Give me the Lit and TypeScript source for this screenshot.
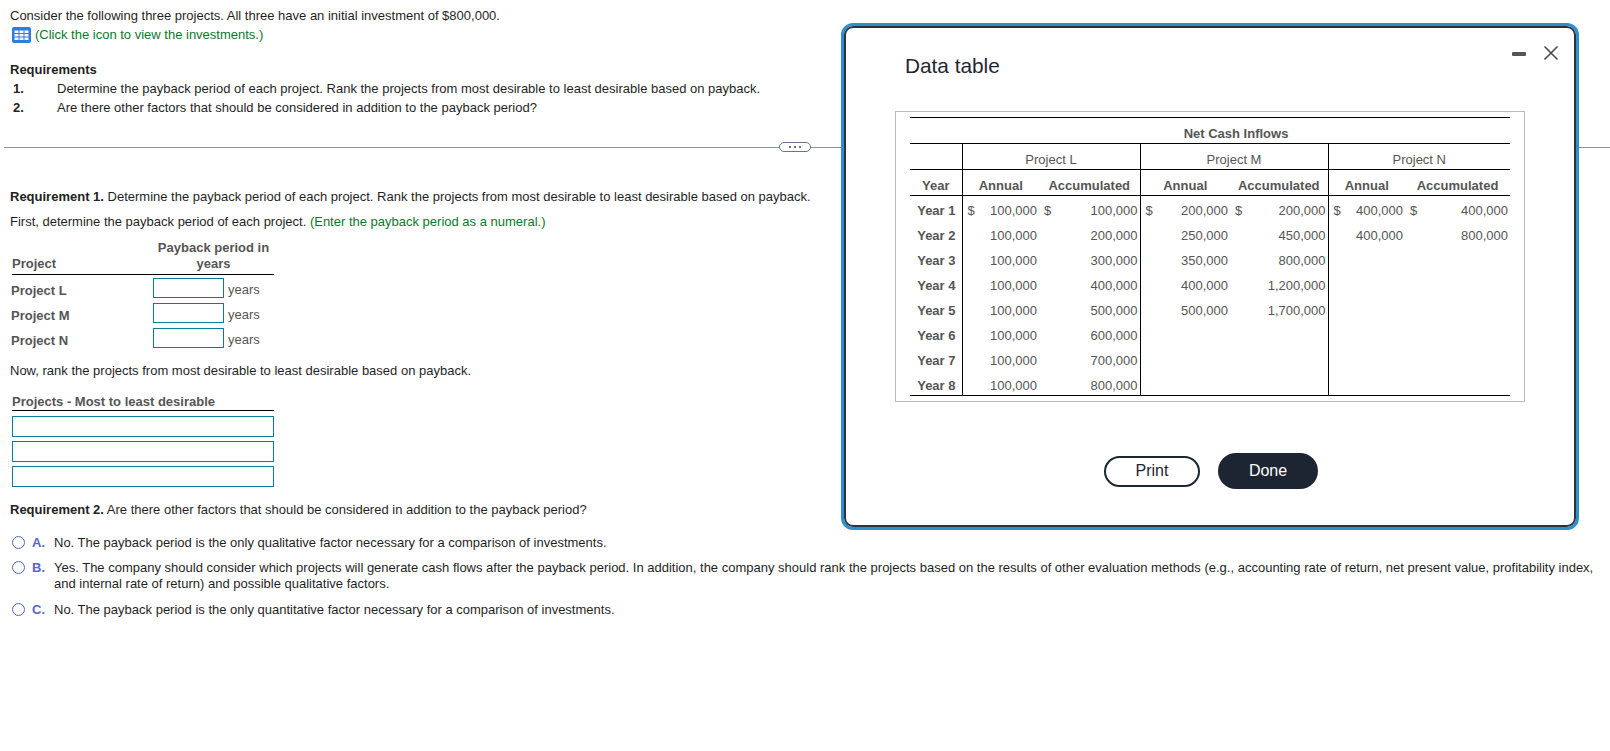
import { LitElement, html, css } from "lit";
import { customElement } from "lit/decorators.js";

const rows = [
  ["Year 1", "100,000", "100,000", "200,000", "200,000", "400,000", "400,000"],
  ["Year 2", "100,000", "200,000", "250,000", "450,000", "400,000", "800,000"],
  ["Year 3", "100,000", "300,000", "350,000", "800,000", "", ""],
  ["Year 4", "100,000", "400,000", "400,000", "1,200,000", "", ""],
  ["Year 5", "100,000", "500,000", "500,000", "1,700,000", "", ""],
  ["Year 6", "100,000", "600,000", "", "", "", ""],
  ["Year 7", "100,000", "700,000", "", "", "", ""],
  ["Year 8", "100,000", "800,000", "", "", "", ""],
];

const options = [
  ["A.", "No. The payback period is the only qualitative factor necessary for a comparison of investments."],
  ["B.", "Yes. The company should consider which projects will generate cash flows after the payback period. In addition, the company should rank the projects based on the results of other evaluation methods (e.g., accounting rate of return, net present value, profitability index, and internal rate of return) and possible qualitative factors."],
  ["C.", "No. The payback period is the only quantitative factor necessary for a comparison of investments."],
];

@customElement("app-root")
export class AppRoot extends LitElement {
  static styles = css`
    :host {
      display: block;
      position: relative;
      width: 1610px;
      height: 751px;
      overflow: hidden;
      background: #fff;
      color: #1f1f1f;
      font-family: "Liberation Sans", Arial, sans-serif;
      font-size: 13px;
      line-height: 16px;
    }

    .page {
      padding: 8px 0 0 10px;
    }

    p {
      margin: 0;
    }

    b {
      color: #222;
    }

    .green {
      color: #0a7a2a;
    }

    .hint {
      display: flex;
      align-items: center;
      gap: 4px;
      margin: 3px 0 0 2px;
    }

    .req-title {
      margin-top: 19px;
      font-weight: bold;
    }

    .req {
      display: flex;
      margin-top: 3px;
    }

    .req b {
      width: 47px;
      padding-left: 3px;
      box-sizing: border-box;
    }

    .divider {
      position: relative;
      height: 1px;
      margin: 31px 0 0 -6px;
      background: #8593a5;
    }

    .pill {
      position: absolute;
      left: 775px;
      top: -5px;
      width: 32px;
      height: 10px;
      box-sizing: border-box;
      display: flex;
      align-items: center;
      justify-content: center;
      gap: 3px;
      background: #fff;
      border: 1px solid #66758a;
      border-radius: 5px;
    }

    .pill i {
      width: 2px;
      height: 2px;
      background: #66758a;
    }

    .r1 {
      margin-top: 41px;
    }

    .first {
      margin-top: 9px;
    }

    .pay {
      display: grid;
      grid-template-columns: 141px 71px 50px;
      width: 262px;
      margin: 10px 0 0 2px;
      color: #555;
      font-weight: bold;
    }

    .pay .head {
      border-bottom: 1px solid #000;
      padding-bottom: 2px;
      margin-bottom: 3px;
      align-self: end;
    }

    .pay .h2 {
      grid-column: 2 / 4;
      text-align: center;
    }

    .pay .name {
      height: 25px;
      line-height: 26px;
      margin-left: -1px;
    }

    .box {
      box-sizing: border-box;
      border: 1px solid #0b7a9b;
      background: #fff;
    }

    .pay .box {
      height: 20px;
    }

    .unit {
      font-weight: normal;
      padding-left: 4px;
      line-height: 24px;
    }

    .now {
      margin-top: 10px;
    }

    .rank {
      width: 262px;
      margin: 15px 0 0 2px;
    }

    .rank .title {
      color: #555;
      font-weight: bold;
      border-bottom: 1px solid #000;
    }

    .rank .box {
      height: 21px;
      margin: 4px 0 0 0;
      width: 262px;
    }

    .rank .title + .box {
      margin-top: 5px;
    }

    .r2 {
      margin-top: 15px;
    }

    .options {
      margin: 17px 0 0 2px;
    }

    .option {
      display: flex;
      margin-bottom: 9px;
    }

    .option:nth-child(2) {
      margin-bottom: 10px;
    }

    .radio {
      flex: none;
      width: 13px;
      height: 13px;
      box-sizing: border-box;
      margin: 1px 7px 0 0;
      border: 1px solid #4a6cc8;
      border-radius: 50%;
    }

    .letter {
      flex: none;
      width: 22px;
      font-weight: bold;
      color: #5468c4;
    }

    .option span {
      width: 1546px;
    }

    .modal {
      position: absolute;
      left: 841px;
      top: 23px;
      width: 738px;
      height: 507px;
      box-sizing: border-box;
      padding: 27px 0 0 61px;
      background: #fff;
      border: 3px solid #2a90d0;
      border-radius: 12px;
      box-shadow: inset 0 0 0 2px #2f3136;
    }

    .modal h2 {
      margin: 0;
      font-size: 20.8px;
      line-height: 26px;
      font-weight: normal;
      color: #1f2733;
    }

    .controls {
      position: absolute;
      top: 20px;
      right: 18px;
      display: flex;
      align-items: center;
      gap: 18px;
    }

    .min {
      width: 14px;
      height: 4px;
      margin-top: 2px;
      border-radius: 1px;
      background: #555;
    }

    .frame {
      width: 630px;
      height: 291px;
      box-sizing: border-box;
      margin: 32px 0 0 -10px;
      padding: 5px 14px;
      border: 1px solid #bbb;
    }

    table {
      width: 600px;
      table-layout: fixed;
      border-collapse: collapse;
      color: #555;
    }

    th,
    td {
      box-sizing: border-box;
      padding: 6px 0 0;
      height: 25px;
    }

    thead th {
      height: 26px;
      padding-top: 6px;
      border-top: 1px solid #000;
      font-weight: bold;
      text-align: center;
    }

    thead th.net {
      padding-left: 52px;
    }

    tbody tr:first-child td {
      border-top: 1px solid #000;
    }

    tbody tr:last-child td {
      border-bottom: 1px solid #000;
    }

    .project {
      font-weight: normal;
    }

    .year {
      padding-right: 6px;
      text-align: right;
      font-weight: bold;
    }

    .sep {
      border-left: 1px solid #000;
    }

    .cell {
      display: flex;
      justify-content: space-between;
      padding: 0 2px 0 5px;
    }

    .buttons {
      display: flex;
      justify-content: center;
      align-items: center;
      gap: 18px;
      width: 630px;
      margin: 51px 0 0 -9px;
    }

    button {
      font: 16px "Liberation Sans", Arial, sans-serif;
      border-radius: 18px;
      padding: 0;
    }

    .print {
      width: 96px;
      height: 31px;
      color: #1e2532;
      background: #fff;
      border: 2px solid #1e2532;
    }

    .done {
      width: 100px;
      height: 36px;
      color: #fff;
      background: #1e2532;
      border: 0;
    }
  `;

  cell(value: string, showDollar: boolean) {
    return html`<div class="cell"><span>${showDollar ? "$" : ""}</span><span>${value}</span></div>`;
  }

  renderTable() {
    return html`
      <table>
        <colgroup>
          <col style="width: 52px" />
          <col style="width: 77px" />
          <col style="width: 101px" />
          <col style="width: 90px" />
          <col style="width: 98px" />
          <col style="width: 77px" />
          <col style="width: 105px" />
        </colgroup>
        <thead>
          <tr><th class="net" colspan="7">Net Cash Inflows</th></tr>
          <tr>
            <th></th>
            <th class="sep project" colspan="2">Project L</th>
            <th class="sep project" colspan="2">Project M</th>
            <th class="sep project" colspan="2">Project N</th>
          </tr>
          <tr>
            <th>Year</th>
            <th class="sep">Annual</th>
            <th>Accumulated</th>
            <th class="sep">Annual</th>
            <th>Accumulated</th>
            <th class="sep">Annual</th>
            <th>Accumulated</th>
          </tr>
        </thead>
        <tbody>
          ${rows.map(
            (r, i) => html`
              <tr>
                <td class="year">${r[0]}</td>
                ${r.slice(1).map(
                  (v, j) => html`<td class=${j % 2 === 0 ? "sep" : ""}>${this.cell(v, i === 0)}</td>`
                )}
              </tr>
            `
          )}
        </tbody>
      </table>
    `;
  }

  render() {
    return html`
      <div class="page">
        <p>Consider the following three projects. All three have an initial investment of $800,000.</p>
        <div class="hint green">
          <svg width="19" height="16" viewBox="0 0 19 16">
            <rect width="19" height="16" rx="2" fill="#2b7de0" />
            <path d="M2.500 3.500h4v2.600h-4zM7.500 3.500h4v2.600h-4zM12.500 3.500h4v2.600h-4zM2.500 7h4v2.600h-4zM7.500 7h4v2.600h-4zM12.500 7h4v2.600h-4zM2.500 10.500h4v2.600h-4zM7.500 10.500h4v2.600h-4zM12.500 10.500h4v2.600h-4z" fill="#fff" />
          </svg>
          <span>(Click the icon to view the investments.)</span>
        </div>
        <p class="req-title">Requirements</p>
        <div class="req"><b>1.</b><span>Determine the payback period of each project. Rank the projects from most desirable to least desirable based on payback.</span></div>
        <div class="req"><b>2.</b><span>Are there other factors that should be considered in addition to the payback period?</span></div>
        <div class="divider"><div class="pill"><i></i><i></i><i></i></div></div>
        <p class="r1"><b>Requirement 1.</b> Determine the payback period of each project. Rank the projects from most desirable to least desirable based on payback.</p>
        <p class="first">First, determine the payback period of each project. <span class="green">(Enter the payback period as a numeral.)</span></p>
        <div class="pay">
          <div class="head">Project</div>
          <div class="head h2">Payback period in<br />years</div>
          ${["Project L", "Project M", "Project N"].map(
            (n) => html`<div class="name">${n}</div><div class="box"></div><div class="unit">years</div>`
          )}
        </div>
        <p class="now">Now, rank the projects from most desirable to least desirable based on payback.</p>
        <div class="rank">
          <div class="title">Projects - Most to least desirable</div>
          <div class="box"></div>
          <div class="box"></div>
          <div class="box"></div>
        </div>
        <p class="r2"><b>Requirement 2.</b> Are there other factors that should be considered in addition to the payback period?</p>
        <div class="options">
          ${options.map(
            ([l, t]) => html`
              <div class="option"><div class="radio"></div><div class="letter">${l}</div><span>${t}</span></div>
            `
          )}
        </div>
      </div>
      <div class="modal">
        <h2>Data table</h2>
        <div class="controls">
          <div class="min"></div>
          <svg width="14" height="14" viewBox="0 0 14 14">
            <path d="M.5.5l13 13M13.500.5l-13 13" stroke="#444" stroke-width="1.500" fill="none" />
          </svg>
        </div>
        <div class="frame">${this.renderTable()}</div>
        <div class="buttons">
          <button class="print">Print</button>
          <button class="done">Done</button>
        </div>
      </div>
    `;
  }
}
